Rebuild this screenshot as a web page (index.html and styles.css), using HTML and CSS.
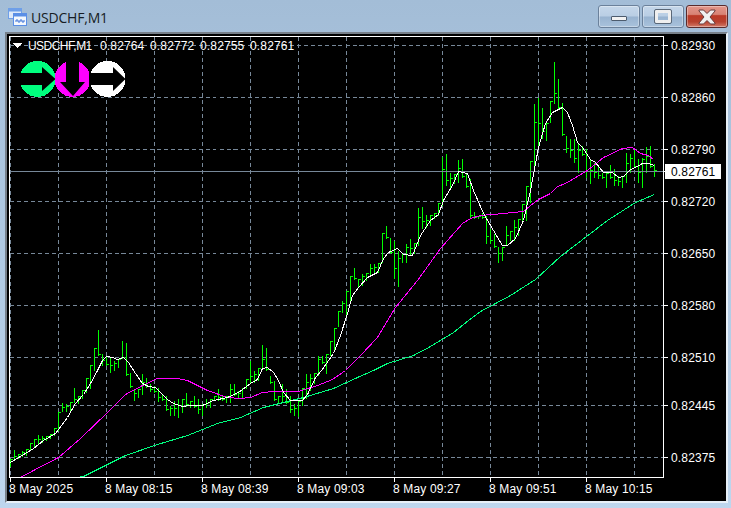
FILE: index.html
```html
<!DOCTYPE html>
<html lang="en">
<head>
  <meta charset="UTF-8">
  <title>USDCHF,M1</title>
  <link rel="stylesheet" href="styles.css">
</head>
<body>
  <div class="window">
    <div class="titlebar">
      <svg class="app-icon" width="20" height="20" viewBox="0 0 20 20">
        <rect x="1.5" y="1.5" width="13" height="10" fill="#dfeaf8" stroke="#6f9fe8"/>
        <rect x="1.5" y="1.5" width="13" height="3" fill="#6f9fe8"/>
        <rect x="6.5" y="6.5" width="13" height="12" fill="#f4f8fd" stroke="#5b8fe6"/>
        <rect x="6.5" y="6.5" width="13" height="3" fill="#5b8fe6"/>
        <path class="app-icon-wave" d="M9 15v-2h2v2h2v-2h2v2h2v-2"/>
      </svg>
      <span class="window-title">USDCHF,M1</span>
      <div class="window-buttons">
        <div class="win-btn">
          <span class="glyph-min"></span>
        </div>
        <div class="win-btn">
          <span class="glyph-max"></span>
        </div>
        <div class="win-btn win-btn-close">
          <svg width="26" height="20" viewBox="0 0 26 20">
            <path class="glyph-close" d="M5 3h4.500l3.500 3.500 3.500-3.500h4.500v1l-5 6 5 6v1h-4.500l-3.500-3.500-3.500 3.500h-4.500v-1l5-6-5-6z"/>
          </svg>
        </div>
      </div>
    </div>

    <div class="chart">
      <svg class="chart-svg" width="720" height="467" viewBox="7 34 720 467">
        <g transform="translate(.5 .5)">
          <path class="grid" d="M9 45H663M9 97H663M9 149H663M9 201H663M9 253H663M9 305H663M9 357H663M9 405H663M9 457H663"/>
          <path class="grid" d="M10 36V477M58 36V477M106 36V477M154 36V477M202 36V477M250 36V477M298 36V477M346 36V477M394 36V477M442 36V477M490 36V477M538 36V477M586 36V477M634 36V477"/>

          <path id="bars" class="bars"/>

          <path class="price-line" d="M10 171H663"/>

          <polyline class="ma-slow" points="77,477 83,476 125,455 157,444 187,435 217,423 240,417 263,407 303,397 333,388 357,377 373,370 387,363 413,355 430,346 453,332 468,320 480,311 510,295 535,279 560,256 590,233 607,220 635,202 654,194"/>
          <polyline class="ma-mid" points="20,477 33,470 58,457 80,438 107,412 125,394 142,385 157,378 177,378 187,380 207,390 227,397 240,398 250,397 262,392 273,391 298,391 317,385 332,379 345,370 360,355 377,337 395,307 417,280 440,248 462,223 470,218 480,215 503,213 523,211 530,205 538,199 550,193 557,186 565,183 587,170 603,157 622,148 632,147 640,153 648,155 653,159"/>
          <polyline class="ma-fast" points="10,462 33,448 43,440 55,433 67,417 75,403 83,394 90,383 97,370 102,360 106,356 112,357 117,359 123,357 128,362 135,373 142,383 148,386 155,387 160,392 167,399 173,403 182,406 190,405 202,405 213,400 227,397 238,392 250,383 257,379 262,368 267,367 273,372 278,380 283,392 290,400 302,400 307,394 315,377 321,370 333,353 340,335 347,313 352,295 358,287 367,277 377,272 383,258 388,252 397,248 403,254 412,255 420,235 430,220 438,214 443,200 452,185 458,171 467,173 473,190 483,213 493,230 502,245 507,245 515,238 523,220 530,190 538,147 545,123 552,112 562,107 567,112 572,125 577,142 582,147 590,159 595,162 603,172 612,172 618,177 623,176 630,169 635,167 642,163 648,163 654,165"/>

          <rect class="frame" x="9" y="36" width="654" height="441"/>
          <path class="ticks" d="M663 45h4M663 97h4M663 149h4M663 201h4M663 253h4M663 305h4M663 357h4M663 405h4M663 457h4M663 171h2M10 477v4M106 477v4M202 477v4M298 477v4M394 477v4M490 477v4M586 477v4"/>
        </g>

        <path class="legend-arrow" d="M12 43h10l-5 5z"/>
        <text class="chart-text legend-name" x="28" y="50">USDCHF,M1</text>
        <text class="chart-text" y="50">
          <tspan x="100">0.82764</tspan>
          <tspan x="150">0.82772</tspan>
          <tspan x="200">0.82755</tspan>
          <tspan x="250">0.82761</tspan>
        </text>

        <!-- signal arrows -->
        <circle cx="37.500" cy="79" r="18" fill="#00ff7f"/>
        <path class="signal-arrow" d="M19 73H42V67L55.500 79 42 91V85H19z"/>
        <circle cx="72.500" cy="79" r="18" fill="#ff00ff"/>
        <path class="signal-arrow" d="M66 60H79V82H85L73 96 60 82H66z"/>
        <circle cx="107.500" cy="79" r="18" fill="#fff"/>
        <path class="signal-arrow" d="M89 73H113V67L125.500 79 113 91V85H89z"/>

        <g class="chart-text">
          <text x="671" y="50">0.82930</text>
          <text x="671" y="102">0.82860</text>
          <text x="671" y="154">0.82790</text>
          <text x="671" y="206">0.82720</text>
          <text x="671" y="258">0.82650</text>
          <text x="671" y="310">0.82580</text>
          <text x="671" y="362">0.82510</text>
          <text x="671" y="410">0.82445</text>
          <text x="671" y="462">0.82375</text>
          <text x="9" y="493">8 May 2025</text>
          <text x="105" y="493">8 May 08:15</text>
          <text x="201" y="493">8 May 08:39</text>
          <text x="297" y="493">8 May 09:03</text>
          <text x="393" y="493">8 May 09:27</text>
          <text x="489" y="493">8 May 09:51</text>
          <text x="585" y="493">8 May 10:15</text>
        </g>

        <rect class="price-tag" x="665" y="164" width="56" height="15"/>
        <text class="chart-text price-tag-text" x="671" y="176">0.82761</text>
      </svg>
    </div>
  </div>

  <script src="chart.js"></script>
</body>
</html>
```

FILE: styles.css
```css
/* Terminal chart window */
body {
  margin: 0;
  overflow: hidden;
  background: #b8d0e8;
  font-family: 'Open Sans', 'Liberation Sans', sans-serif;
}

.window {
  width: 731px;
  height: 508px;
  box-sizing: border-box;
  display: flex;
  flex-direction: column;
  padding: 0 3px 5px 5px;
  background: linear-gradient(to bottom, #a3bdd7, #bed6ee);
}

.titlebar {
  height: 32px;
  display: flex;
  align-items: flex-start;
  flex: none;
}

.app-icon {
  margin: 7px 0 0 2px;
}

.app-icon-wave {
  fill: none;
  stroke: #3f74d8;
  stroke-width: 1;
}

.window-title {
  margin: 8px 0 0 4px;
  font-size: 14px;
  line-height: 20px;
  color: #161c24;
  letter-spacing: -0.2px;
}

.window-buttons {
  margin-left: auto;
  margin-top: 5px;
  display: flex;
  gap: 2px;
}

.win-btn {
  width: 42px;
  height: 23px;
  box-sizing: border-box;
  border: 1px solid #6b819b;
  border-radius: 3px;
  display: flex;
  align-items: center;
  justify-content: center;
  background: linear-gradient(to bottom, #c5d7ea 0%, #b9cee4 48%, #98b3d0 52%, #a9c2dc 100%);
  box-shadow: inset 0 0 0 1px rgba(255, 255, 255, 0.35);
}

.win-btn-close {
  border-color: #5a2b2b;
  background: linear-gradient(to bottom, #e3968a 0%, #d88375 40%, #bb3a27 46%, #b8412e 75%, #d27b69 100%);
}

.glyph-min {
  width: 16px;
  height: 5px;
  box-sizing: border-box;
  margin-top: 3px;
  background: #f2f2f2;
  border: 1px solid #4d5c6e;
  border-radius: 1px;
}

.glyph-max {
  width: 16px;
  height: 13px;
  box-sizing: border-box;
  background: transparent;
  border: 3px solid #efefef;
  outline: 1px solid #5a6878;
  border-radius: 1px;
}

.glyph-close {
  fill: #f0f0f0;
  stroke: #6a3a3a;
  stroke-width: 1;
}

.chart {
  flex: 1;
  border-style: solid;
  border-width: 2px;
  border-color: #77808a #e8f0f8 #e8f0f8 #77808a;
  background: #000;
}

.chart-svg {
  display: block;
  shape-rendering: crispEdges;
}

.grid {
  fill: none;
  stroke: #778899;
  stroke-width: 1;
  stroke-dasharray: 4 3;
}

.bars {
  fill: none;
  stroke: #00ff00;
  stroke-width: 1;
}

.price-line {
  fill: none;
  stroke: #778899;
}

.ma-fast, .ma-mid, .ma-slow {
  fill: none;
  stroke-width: 1;
}

.ma-fast {
  stroke: #fff;
}

.ma-mid {
  stroke: #ff00ff;
}

.ma-slow {
  stroke: #00ff7f;
}

.frame {
  fill: none;
  stroke: #fff;
}

.ticks {
  fill: none;
  stroke: #fff;
}

.legend-arrow {
  fill: #fff;
}

.signal-arrow {
  fill: #000;
  shape-rendering: auto;
}

.chart-text {
  fill: #fff;
  font-family: 'Liberation Sans', Arial, sans-serif;
  font-size: 12px;
  letter-spacing: 0.15px;
}

.legend-name {
  letter-spacing: -0.55px;
}

.price-tag {
  fill: #fff;
}

.price-tag-text {
  fill: #000;
}
```

FILE: chart.js
```js
// high / low for every bar, one bar each 4px starting at x = 10
var bars = [
  [458,466],[449,460],[453,458],[450,456],[448,455],[442,449],[438,446],[434,443],[435,442],[435,440],
  [433,438],[427,435],[411,430],[402,411],[403,411],[401,410],[387,402],[395,403],[389,398],[377,392],
  [364,388],[347,370],[329,355],[353,365],[355,365],[357,372],[360,370],[358,367],[340,358],[342,375],
  [372,387],[388,400],[388,397],[373,394],[377,387],[383,391],[385,392],[387,401],[393,400],[395,410],
  [405,415],[400,415],[398,417],[398,412],[392,406],[400,407],[395,407],[398,413],[403,415],[398,407],
  [398,407],[395,400],[388,400],[394,400],[395,402],[383,402],[383,395],[390,398],[387,398],[378,388],
  [360,383],[370,382],[367,380],[344,368],[347,370],[375,383],[380,400],[395,402],[383,402],[388,403],
  [395,412],[403,415],[400,416],[387,405],[373,398],[373,390],[372,383],[355,375],[355,363],[353,373],
  [340,355],[327,350],[310,326],[300,312],[290,315],[275,300],[267,279],[278,286],[273,285],[272,280],
  [263,275],[263,273],[262,272],[232,262],[225,238],[237,253],[240,278],[250,286],[253,262],[243,262],
  [238,255],[242,253],[207,245],[206,228],[214,227],[214,225],[212,218],[202,215],[156,205],[153,185],
  [172,187],[173,183],[159,182],[158,177],[173,187],[178,217],[211,218],[215,218],[212,218],[215,243],
  [228,243],[233,247],[246,262],[246,260],[225,245],[230,240],[219,240],[218,235],[203,222],[185,220],
  [160,202],[103,165],[97,147],[107,138],[122,140],[100,122],[61,103],[78,108],[102,135],[135,152],
  [138,157],[138,162],[143,172],[145,155],[148,177],[158,183],[162,177],[165,178],[172,178],[172,187],
  [164,178],[168,185],[175,185],[175,187],[152,182],[153,172],[148,167],[158,182],[157,187],[146,172],
  [145,167],[163,176]
];

function clamp(v, lo, hi) {
  return Math.max(lo, Math.min(hi, v));
}

var d = '';
var prevClose = bars[0][1] - 2;

bars.forEach(function (bar, i) {
  var x = 10 + i * 4;
  var next = bars[i + 1] || bar;
  var nextMid = Math.round((next[0] + next[1]) / 2);
  var open = clamp(prevClose, bar[0] + 1, bar[1] - 1);
  var close = clamp(nextMid, bar[0] + 1, bar[1] - 1);
  d += 'M' + x + ' ' + bar[0] + 'V' + bar[1];
  d += 'M' + (x - 1) + ' ' + open + 'h1';
  d += 'M' + x + ' ' + close + 'h2';
  prevClose = close;
});

document.getElementById('bars').setAttribute('d', d);
```
